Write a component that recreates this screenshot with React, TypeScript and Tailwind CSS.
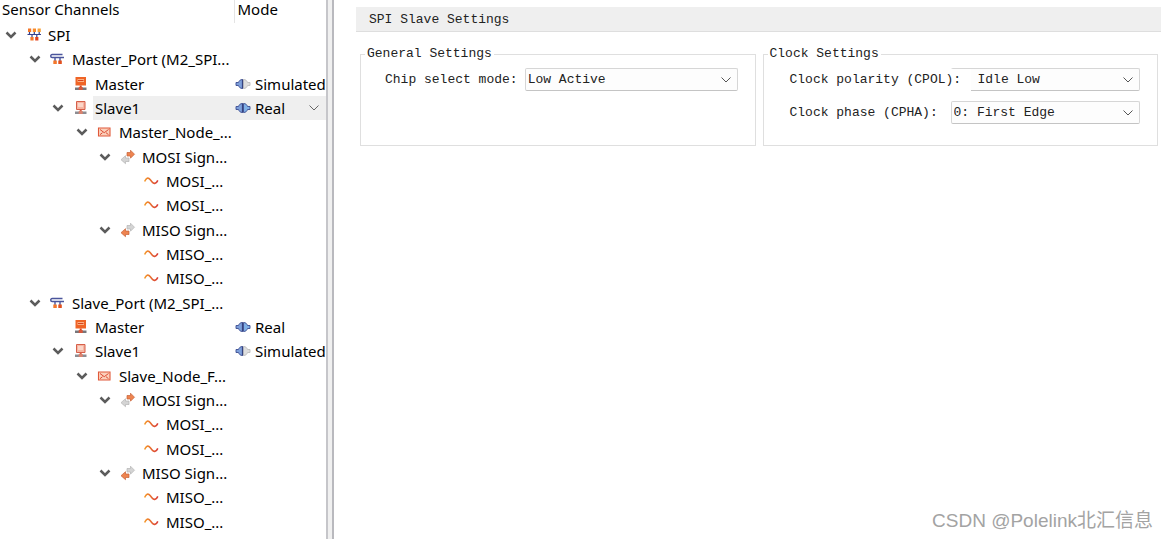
import { useId } from 'react';
import type { ReactNode } from 'react';
import clsx from 'clsx';

type IconName = 'bus' | 'port' | 'master' | 'slave' | 'frame' | 'mosi' | 'miso' | 'signal';
type Mode = 'Simulated' | 'Real';

interface TreeRow {
  label: string;
  icon: IconName;
  level: number;
  mode?: Mode;
  leaf?: boolean;
  selected?: boolean;
}

const INDENT = ['pl-0', 'pl-[24px]', 'pl-[47px]', 'pl-[71px]', 'pl-[94px]', 'pl-[118px]'];

const ROWS: TreeRow[] = [
  { label: 'SPI', icon: 'bus', level: 0 },
  { label: 'Master_Port (M2_SPI...', icon: 'port', level: 1 },
  { label: 'Master', icon: 'master', level: 2, mode: 'Simulated', leaf: true },
  { label: 'Slave1', icon: 'slave', level: 2, mode: 'Real', selected: true },
  { label: 'Master_Node_...', icon: 'frame', level: 3 },
  { label: 'MOSI Sign...', icon: 'mosi', level: 4 },
  { label: 'MOSI_...', icon: 'signal', level: 5, leaf: true },
  { label: 'MOSI_...', icon: 'signal', level: 5, leaf: true },
  { label: 'MISO Sign...', icon: 'miso', level: 4 },
  { label: 'MISO_...', icon: 'signal', level: 5, leaf: true },
  { label: 'MISO_...', icon: 'signal', level: 5, leaf: true },
  { label: 'Slave_Port (M2_SPI_...', icon: 'port', level: 1 },
  { label: 'Master', icon: 'master', level: 2, mode: 'Real', leaf: true },
  { label: 'Slave1', icon: 'slave', level: 2, mode: 'Simulated' },
  { label: 'Slave_Node_F...', icon: 'frame', level: 3 },
  { label: 'MOSI Sign...', icon: 'mosi', level: 4 },
  { label: 'MOSI_...', icon: 'signal', level: 5, leaf: true },
  { label: 'MOSI_...', icon: 'signal', level: 5, leaf: true },
  { label: 'MISO Sign...', icon: 'miso', level: 4 },
  { label: 'MISO_...', icon: 'signal', level: 5, leaf: true },
  { label: 'MISO_...', icon: 'signal', level: 5, leaf: true },
];

// ---------- Icons ----------

const RIGHT_ARROW = 'M7 3.500h3.500V1.200L14.500 5.200l-4 4V7H7z';
const LEFT_ARROW = 'M9 9H5.500V6.700L1 10.700l4.500 4v-2.200H9z';

function TreeIcon({ name }: { name: IconName }) {
  const id = useId();
  return (
    <svg viewBox="0 0 16 16" className="size-4 shrink-0" aria-hidden="true">
      {name === 'bus' && (
        <>
          <path d="M1.500 7.500h13.500M3.500 4v3.500M8.300 4v3.500M13.200 4v3.500M6 7.500V11M10.800 7.500V11" stroke="#34408c" strokeWidth="1.200" fill="none" />
          <path d="M2 1.500h3.200V5H2zM4.400 10h3.200v3.500H4.400z" fill="#f4772a" />
          <path d="M6.800 1.500H10V5H6.800z" fill="#f98a2a" />
          <path d="M11.600 1.500h3.200V5h-3.200z" fill="#f8a13a" />
          <path d="M9.200 10h3.200v3.500H9.200z" fill="#e2401e" />
        </>
      )}
      {name === 'port' && (
        <>
          <path d="M12.500 3.500H2.200Q.7 3.500.7 5t1.500 1.500H14M5 6.500V10M10 6.500V10" stroke="#4a559c" strokeWidth="1.400" fill="none" />
          <path d="M3.300 9.500h3.500V13H3.300z" fill="#f4772a" />
          <path d="M8.300 9.500h3.500V13H8.300z" fill="#e2501e" />
        </>
      )}
      {name === 'master' && (
        <>
          <path d="M2.500 1h10.500v8.500H2.500z" fill="#ef6426" />
          <path d="M4.500 3h6.500v3H4.500z" fill="#fbb184" />
          <path d="M5 4.500h5.500" stroke="#d8431d" />
          <path d="M6.700 9.500h2v2h-2z" fill="#d8431d" />
          <path d="M2 11.500h11.500V14H2z" fill="#77777c" />
          <path d="M5.700 11h4v3h-4z" fill="#d8573a" />
        </>
      )}
      {name === 'slave' && (
        <>
          <path d="M3.500 1.500h8.500v8H3.500z" fill="#f6b5a2" stroke="#d65f4a" />
          <path d="M5 3h5v4H5z" fill="#fbd5c8" />
          <path d="M6.700 10h2v2h-2z" fill="#d65f4a" />
          <path d="M2 11.500h11.500V14H2z" fill="#8d8d92" />
          <path d="M5.700 11h4v3h-4z" fill="#d9836f" />
        </>
      )}
      {name === 'frame' && (
        <>
          <path d="M1.500 4h11.500v8H1.500z" fill="#fbd0bb" stroke="#e0593a" strokeWidth="1.100" />
          <path d="M3 5.500 7.250 8.700 11.500 5.500M3 10.700l2.500-2M11.500 10.700l-2.500-2" fill="none" stroke="#dc4b32" strokeWidth="1" />
        </>
      )}
      {(name === 'mosi' || name === 'miso') && (
        <>
          <path d={RIGHT_ARROW} fill={name === 'mosi' ? '#ee8450' : '#d4d4d4'} stroke={name === 'mosi' ? '#c66138' : '#b4b4b4'} strokeWidth=".7" />
          <path d={LEFT_ARROW} fill={name === 'miso' ? '#ee8450' : '#d4d4d4'} stroke={name === 'miso' ? '#c66138' : '#b4b4b4'} strokeWidth=".7" />
        </>
      )}
      {name === 'signal' && (
        <>
          <linearGradient id={id} x1="0" x2="1" y1="0" y2="0">
            <stop offset="0" stopColor="#f59a2c" />
            <stop offset="1" stopColor="#d83a35" />
          </linearGradient>
          <path d="M.6 8.500C2.100 5 4.100 4 6.100 6.500l2 2.500c2 2.500 4.200 1.500 5.700-1.700" fill="none" stroke={`url(#${id})`} strokeWidth="1.600" />
        </>
      )}
    </svg>
  );
}

function ModeIcon({ mode }: { mode: Mode }) {
  const real = mode === 'Real';
  return (
    <svg viewBox="0 0 16 16" className="size-4 shrink-0" aria-hidden="true">
      <path d="M7.500 3.500C5 3.500 4 5 3.500 6.500H1v3h2.500C4 11 5 12.500 7.500 12.500z" fill="#7d9fda" stroke="#3b4c91" strokeWidth=".9" />
      <path
        d="M8.500 3.500c2.500 0 3.500 1.500 4 3H15v3h-2.500c-.5 1.500-1.500 3-4 3z"
        fill={real ? '#7fb0e6' : '#dedede'}
        stroke={real ? '#3b4c91' : '#bcbcbc'}
        strokeWidth=".9"
      />
      <path d="M7.500 3.500v9" stroke="#35427f" strokeWidth="1.200" />
    </svg>
  );
}

function Chevron({ className }: { className?: string }) {
  return (
    <svg viewBox="0 0 12 12" className={clsx('size-3', className)} fill="none" stroke="currentColor" aria-hidden="true">
      <path d="M1.500 3.500 6 8l4.500-4.500" />
    </svg>
  );
}

// ---------- Channel tree ----------

function ChannelRow({ row }: { row: TreeRow }) {
  return (
    <tr className="h-6 nth-[3n]:h-[25px]">
      <td className="h-[inherit] p-0">
        <div className={clsx('flex h-full items-center', INDENT[row.level])}>
          <span className="mr-1 flex w-[22px] shrink-0 justify-center">
            {!row.leaf && (
              <button type="button" aria-label={`Collapse ${row.label}`} aria-expanded="true" className="text-[#5c5c5c]">
                <Chevron className="stroke-[2.500px]" />
              </button>
            )}
          </span>
          <TreeIcon name={row.icon} />
          <span className={clsx('ml-1 flex h-full flex-1 items-center pl-0.5', row.selected && 'bg-[#efefef]')}>{row.label}</span>
        </div>
      </td>
      <td className={clsx('h-[inherit] p-0', row.selected && 'bg-[#efefef]')}>
        {row.mode && (
          <div className="flex h-full items-center gap-1 pl-px">
            <ModeIcon mode={row.mode} />
            {row.selected ? (
              <span className="relative flex flex-1 items-center">
                <select aria-label="Mode" defaultValue={row.mode} className="w-full appearance-none bg-transparent">
                  <option>Real</option>
                  <option>Simulated</option>
                </select>
                <Chevron className="pointer-events-none absolute right-1.5 text-[#666]" />
              </span>
            ) : (
              row.mode
            )}
          </div>
        )}
      </td>
    </tr>
  );
}

function ChannelTree() {
  return (
    <aside className="w-[326px] shrink-0">
      <table className="w-full table-fixed border-collapse font-['Noto_Sans',sans-serif] text-[15px] leading-5 whitespace-nowrap">
        <thead>
          <tr className="h-[23px] text-left align-top leading-[18px]">
            <th className="w-[234px] p-0 pl-0.5 font-normal">Sensor Channels</th>
            <th className="border-l border-[#e4e4e4] p-0 pl-[3px] font-normal">Mode</th>
          </tr>
        </thead>
        <tbody>
          {ROWS.map((row, i) => (
            <ChannelRow key={i} row={row} />
          ))}
        </tbody>
      </table>
    </aside>
  );
}

// ---------- Settings ----------

function SelectBox({ id, options, inset }: { id: string; options: string[]; inset?: boolean }) {
  return (
    <div className="relative flex flex-1 items-center">
      <select
        id={id}
        className={clsx(
          'h-[23px] w-full appearance-none rounded-xs border border-[#d6d6d6] border-b-[#c4c4c4] bg-[#fdfdfd]',
          inset ? 'pl-[26px]' : 'pl-0.5',
        )}
      >
        {options.map((o) => (
          <option key={o}>{o}</option>
        ))}
      </select>
      <Chevron className="pointer-events-none absolute right-1.5 text-[#555]" />
    </div>
  );
}

function Group({ title, children }: { title: string; children: ReactNode }) {
  return (
    <fieldset className="min-w-0 border border-[#dfdfdf] pr-[17px] pb-[21px] pl-1">
      <legend className="px-0.5 leading-5">{title}</legend>
      <div className="flex flex-col gap-2.5 pt-1">{children}</div>
    </fieldset>
  );
}

function SettingsPanel() {
  return (
    <main className="flex min-w-0 flex-1 flex-col pt-[7px] pr-1.5 pl-[22px] font-['Liberation_Mono',monospace] text-[13px] leading-5 text-[#222]">
      <h1 className="border-b border-[#dedede] bg-[#efefef] pt-[3px] pb-px pl-[13px]">SPI Slave Settings</h1>
      <div className="mt-3 grid grid-cols-2 gap-[7px] pr-[3px] pl-1">
        <Group title="General Settings">
          <div className="flex items-center gap-[7px] pl-5">
            <label htmlFor="cs-mode">Chip select mode:</label>
            <SelectBox id="cs-mode" options={['Low Active', 'High Active']} />
          </div>
        </Group>
        <Group title="Clock Settings">
          <div className="flex items-center pl-[22px]">
            {/* the label is wider than its column and lies over the box */}
            <label htmlFor="cpol" className="z-10 -mr-5 w-[181px] self-end bg-white pt-px pb-px">
              Clock polarity (CPOL):
            </label>
            <SelectBox id="cpol" options={['Idle Low', 'Idle High']} inset />
          </div>
          <div className="flex items-center pl-[22px]">
            <label htmlFor="cpha" className="w-[161px]">
              Clock phase (CPHA):
            </label>
            <SelectBox id="cpha" options={['0: First Edge', '1: Second Edge']} />
          </div>
        </Group>
      </div>
      <p className="mt-auto mr-2 mb-1.5 self-end font-['Liberation_Sans','Noto_Sans_CJK_SC',sans-serif] text-[19px] leading-6 text-[#a3a3a3]">
        CSDN @Polelink北汇信息
      </p>
    </main>
  );
}

export default function App() {
  return (
    <div className="flex min-h-screen bg-white text-black">
      <ChannelTree />
      <div className="w-2 shrink-0 border-x-2 border-l-[#c6c6ca] border-r-[#b9b9be] bg-[#f0f0f0]" />
      <SettingsPanel />
    </div>
  );
}
